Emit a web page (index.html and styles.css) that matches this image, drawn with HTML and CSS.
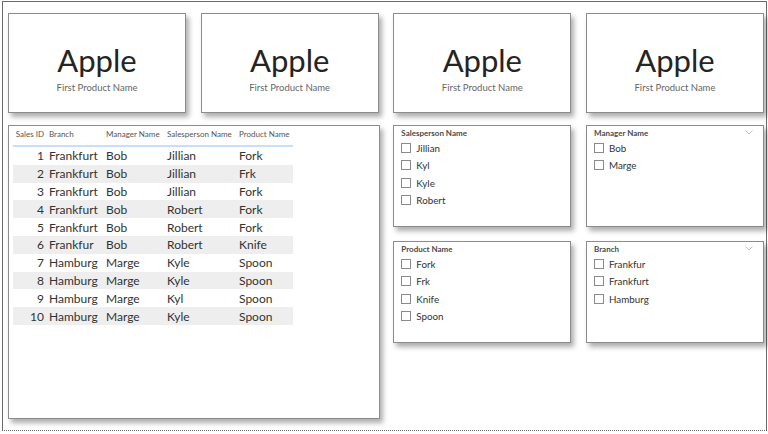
FILE: index.html
```html
<!DOCTYPE html>
<html>
<head>
<meta charset="utf-8">
<link rel="stylesheet" href="styles.css">
</head>
<body>
<div class="frame">
  <div class="cards">
    <div class="card"><div class="card-value">Apple</div><div class="card-label">First Product Name</div></div>
    <div class="card"><div class="card-value">Apple</div><div class="card-label">First Product Name</div></div>
    <div class="card"><div class="card-value">Apple</div><div class="card-label">First Product Name</div></div>
    <div class="card"><div class="card-value">Apple</div><div class="card-label">First Product Name</div></div>
  </div>
  <div class="bottom">
    <div class="table-visual">
      <div class="tbl">
        <div class="thead">
          <div class="c num">Sales ID</div><div class="c">Branch</div><div class="c">Manager Name</div><div class="c">Salesperson Name</div><div class="c">Product Name</div>
        </div>
        <div class="tr"><div class="c num">1</div><div class="c">Frankfurt</div><div class="c">Bob</div><div class="c">Jillian</div><div class="c">Fork</div></div>
        <div class="tr alt"><div class="c num">2</div><div class="c">Frankfurt</div><div class="c">Bob</div><div class="c">Jillian</div><div class="c">Frk</div></div>
        <div class="tr"><div class="c num">3</div><div class="c">Frankfurt</div><div class="c">Bob</div><div class="c">Jillian</div><div class="c">Fork</div></div>
        <div class="tr alt"><div class="c num">4</div><div class="c">Frankfurt</div><div class="c">Bob</div><div class="c">Robert</div><div class="c">Fork</div></div>
        <div class="tr"><div class="c num">5</div><div class="c">Frankfurt</div><div class="c">Bob</div><div class="c">Robert</div><div class="c">Fork</div></div>
        <div class="tr alt"><div class="c num">6</div><div class="c">Frankfur</div><div class="c">Bob</div><div class="c">Robert</div><div class="c">Knife</div></div>
        <div class="tr"><div class="c num">7</div><div class="c">Hamburg</div><div class="c">Marge</div><div class="c">Kyle</div><div class="c">Spoon</div></div>
        <div class="tr alt"><div class="c num">8</div><div class="c">Hamburg</div><div class="c">Marge</div><div class="c">Kyle</div><div class="c">Spoon</div></div>
        <div class="tr"><div class="c num">9</div><div class="c">Hamburg</div><div class="c">Marge</div><div class="c">Kyl</div><div class="c">Spoon</div></div>
        <div class="tr alt"><div class="c num">10</div><div class="c">Hamburg</div><div class="c">Marge</div><div class="c">Kyle</div><div class="c">Spoon</div></div>
      </div>
    </div>

    <div class="slicer">
      <div class="slicer-head"><span class="slicer-title">Salesperson Name</span></div>
      <div class="item"><span class="box"></span>Jillian</div>
      <div class="item"><span class="box"></span>Kyl</div>
      <div class="item"><span class="box"></span>Kyle</div>
      <div class="item"><span class="box"></span>Robert</div>
    </div>
    <div class="slicer">
      <div class="slicer-head"><span class="slicer-title">Manager Name</span>
        <svg class="chev" width="8" height="5" viewBox="0 0 8 5"><path d="M0.5 0.5 L4 4 L7.5 0.5" fill="none" stroke="#b0b0b0" stroke-width="0.8"/></svg>
      </div>
      <div class="item"><span class="box"></span>Bob</div>
      <div class="item"><span class="box"></span>Marge</div>
    </div>
    <div class="slicer">
      <div class="slicer-head"><span class="slicer-title">Product Name</span></div>
      <div class="item"><span class="box"></span>Fork</div>
      <div class="item"><span class="box"></span>Frk</div>
      <div class="item"><span class="box"></span>Knife</div>
      <div class="item"><span class="box"></span>Spoon</div>
    </div>
    <div class="slicer">
      <div class="slicer-head"><span class="slicer-title">Branch</span>
        <svg class="chev" width="8" height="5" viewBox="0 0 8 5"><path d="M0.5 0.5 L4 4 L7.5 0.5" fill="none" stroke="#b0b0b0" stroke-width="0.8"/></svg>
      </div>
      <div class="item"><span class="box"></span>Frankfur</div>
      <div class="item"><span class="box"></span>Frankfurt</div>
      <div class="item"><span class="box"></span>Hamburg</div>
    </div>
  </div>
</div>
</body>
</html>
```

FILE: styles.css
```css
html, body {
  margin: 0;
  padding: 0;
  background: #ffffff;
  font-family: Lato, "Noto Sans", sans-serif;
}
.frame {
  box-sizing: border-box;
  margin: 1px 0 0 2px;
  width: 765px;
  height: 430px;
  border-top: 1px solid #6a6a6a;
  border-left: 1px solid #6a6a6a;
  border-right: 1px solid #6a6a6a;
  border-bottom: 1px dotted #6a6a6a;
  padding: 11px 0 0 5px;
  display: flex;
  flex-direction: column;
  gap: 12px;
}
.cards {
  display: grid;
  grid-template-columns: repeat(4, 178px);
  column-gap: 14.67px;
}
.card, .table-visual, .slicer {
  box-sizing: border-box;
  background: #fff;
  border: 1px solid #8c8c8c;
  box-shadow: 3px 4px 5px rgba(0, 0, 0, 0.32);
}
.card {
  height: 100px;
  display: flex;
  flex-direction: column;
  align-items: center;
  padding-top: 31px;
}
.card-value {
  font-size: 31px;
  line-height: 31px;
  color: #252423;
}
.card-label {
  font-size: 9.5px;
  line-height: 12px;
  color: #666;
  margin-top: 6px;
}
.bottom {
  display: grid;
  grid-template-columns: repeat(4, 178px);
  grid-template-rows: 102px 102px;
  column-gap: 14.67px;
  row-gap: 14px;
}
.table-visual {
  grid-column: 1 / 3;
  grid-row: 1 / 3;
  width: 372px;
  height: 294px;
  padding: 3px 0 0 4px;
}
.tbl {
  width: 280px;
}
.thead, .tr {
  display: grid;
  grid-template-columns: 34px 57px 61px 72px 56px;
  align-items: center;
}
.thead {
  height: 16px;
  border-bottom: 2px solid #c7e0f4;
  font-size: 8px;
  line-height: 10px;
  color: #555;
  align-items: start;
}
.tr {
  height: 17.8px;
  font-size: 12px;
  color: #333;
}
.tr.alt {
  background: #eeeeee;
}
.c {
  padding-left: 2px;
  white-space: nowrap;
  overflow: hidden;
}
.num {
  text-align: right;
  padding-left: 0;
  padding-right: 3px;
}
.slicer {
  padding: 1px 7px 0 7px;
}
.slicer-head {
  display: flex;
  justify-content: space-between;
  align-items: center;
  height: 11px;
  margin-bottom: 1px;
}
.slicer-title {
  font-size: 8px;
  font-weight: bold;
  color: #4a4a4a;
}
.chev {
  margin-right: 3px;
}
.item {
  display: flex;
  align-items: center;
  height: 17.5px;
  font-size: 9.8px;
  color: #333;
}
.box {
  box-sizing: border-box;
  width: 10px;
  height: 10px;
  border: 1px solid #8a8a8a;
  margin-right: 5px;
  background: #fff;
}
```
